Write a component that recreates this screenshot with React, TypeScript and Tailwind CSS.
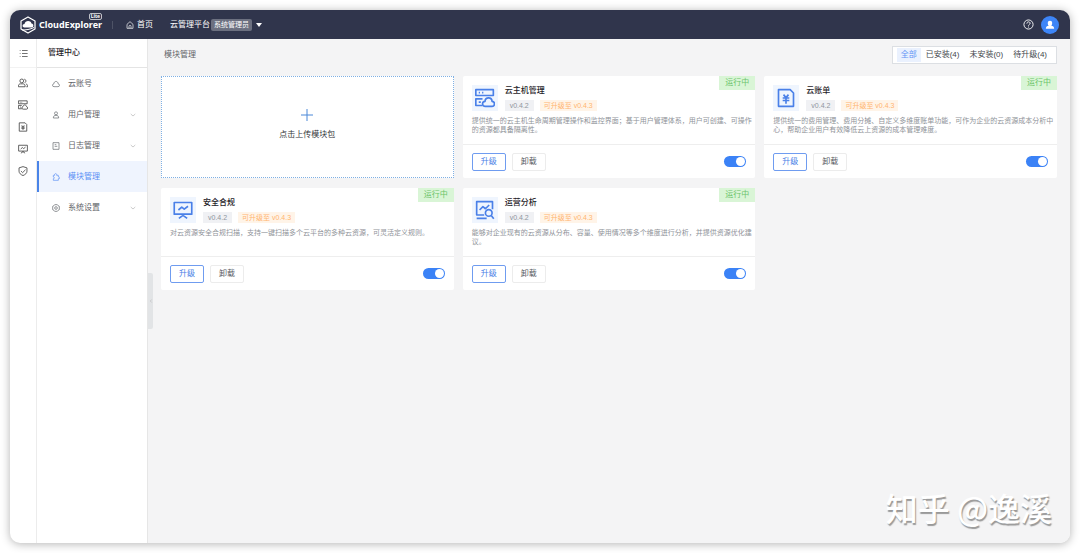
import React, { useState } from 'react';

type IconProps = { className?: string };

type Module = {
  id: string;
  name: string;
  description: string;
  version: string;
  latest: string;
  icon: (props: IconProps) => React.JSX.Element;
};

/* Icons */
function Svg({ className, size = 24, children }: { className?: string; size?: number; children: React.ReactNode }) {
  return (
    <svg
      className={className}
      viewBox={`0 0 ${size} ${size}`}
      fill="none"
      stroke="currentColor"
      strokeWidth="2"
      strokeLinejoin="round"
      aria-hidden="true"
    >
      {children}
    </svg>
  );
}

const ListIcon = ({ className }: IconProps) => (
  <Svg className={className}>
    <path d="M8 4h15M8 12h15M8 20h15M2 4h2M2 12h2M2 20h2" />
  </Svg>
);

const UsersIcon = ({ className }: IconProps) => (
  <Svg className={className}>
    <circle cx="9" cy="7" r="4.5" />
    <path d="M1 21v-2c0-3 2-5 5-5h6c3 0 5 2 5 5v2H1z" />
    <path d="M15 3c5 0 5 8 1 8M19 14c3 1 4 3 4 7h-3" />
  </Svg>
);

const ServerCloudIcon = ({ className }: IconProps) => (
  <Svg className={className}>
    <path d="M1 2h21v7H1zM9 21H1v-8h8M4.500 5.500H6M8.500 5.500H10M4.500 17H7" />
    <path d="M12.500 22c-4.500 0-4.500-5.500-.5-6 .5-5.500 8-5.500 8.500 0 4 .5 3.500 6 0 6z" />
  </Svg>
);

const BillIcon = ({ className }: IconProps) => (
  <Svg className={className}>
    <path d="M3 2h14l4 4v16H3z" />
    <path d="M9 8l3 3.500L15 8M8 12h8M8 15h8M12 11.500V19" />
  </Svg>
);

const BoardIcon = ({ className }: IconProps) => (
  <Svg className={className}>
    <path d="M1.500 3h21v14h-21zM6.500 12l4-3.500 3 2.500L18 7.500M12 17v2M7 22l5-3.500 5 3.500" />
  </Svg>
);

const AnalysisIcon = ({ className }: IconProps) => (
  <Svg className={className}>
    <path d="M11 18H2V2h19v9M5.500 12l4-4 3 2.500L17 6M2 22h12" />
    <circle cx="16.500" cy="15.500" r="4" />
    <path d="M19.500 18.500l3 4" />
  </Svg>
);

const ShieldIcon = ({ className }: IconProps) => (
  <Svg className={className}>
    <path d="M12 1.500l9.500 3v8c0 5-4 8-9.500 10.500C6.500 20.500 2.500 17.500 2.500 12.500v-8z" />
    <path d="M7 12l4 4 7-7" />
  </Svg>
);

const CloudIcon = ({ className }: IconProps) => (
  <Svg className={className}>
    <path d="M6 20c-6 0-6-8-.5-8.500C6 2 18 2 18.500 11.500 24 12 24 20 18 20z" />
  </Svg>
);

const UserIcon = ({ className }: IconProps) => (
  <Svg className={className}>
    <circle cx="12" cy="7" r="4.500" />
    <path d="M4 21c0-6 3-8 8-8s8 2 8 8z" />
  </Svg>
);

const LogIcon = ({ className }: IconProps) => (
  <Svg className={className}>
    <path d="M3 2h18v20H3zM8 8h5M8 13h8" />
  </Svg>
);

const PuzzleIcon = ({ className }: IconProps) => (
  <Svg className={className}>
    <path d="M4 7h4c-2-7 8-7 6 0h5v5c6-1 6 6 0 5v5H4v-5c4 1 4-6 0-5z" />
  </Svg>
);

const GearIcon = ({ className }: IconProps) => (
  <Svg className={className}>
    <path d="M8 2h8l2 3 4 2v10l-4 2-2 3H8l-2-3-4-2V7l4-2z" />
    <circle cx="12" cy="12" r="4" />
  </Svg>
);

const HomeIcon = ({ className }: IconProps) => (
  <Svg className={className}>
    <path d="M3 10l9-8 9 8v12H3zM9 22v-6c0-4 6-4 6 0v6" />
  </Svg>
);

const HelpIcon = ({ className }: IconProps) => (
  <Svg className={className}>
    <circle cx="12" cy="12" r="10" />
    <path d="M8.500 10c0-5 7-5 7-.5 0 2.500-3.500 2.500-3.500 5M12 16.500v2" />
  </Svg>
);

const ChevronIcon = ({ className }: IconProps) => (
  <Svg className={className}>
    <path d="M3 8l9 8 9-8" />
  </Svg>
);

const LogoIcon = ({ className }: IconProps) => (
  <svg className={className} viewBox="0 0 32 36" fill="none" aria-hidden="true">
    <path d="M16 2l14 8v16l-14 8-14-8V10z" stroke="#fff" strokeWidth="2.5" strokeLinejoin="round" />
    <path d="M9 23c-5 0-5-7 0-7 1-7 12-8 14-1 5 0 5 8 0 8z" fill="#fff" />
    <path d="M4 28c8 0 16-1 24-5" stroke="#fff" strokeWidth="2" />
  </svg>
);

const railItems = [
  { label: '用户', icon: UsersIcon },
  { label: '云主机管理', icon: ServerCloudIcon },
  { label: '云账单', icon: BillIcon },
  { label: '运营分析', icon: BoardIcon },
  { label: '安全合规', icon: ShieldIcon },
];

const menuItems = [
  { label: '云账号', icon: CloudIcon, expandable: false },
  { label: '用户管理', icon: UserIcon, expandable: true },
  { label: '日志管理', icon: LogIcon, expandable: true },
  { label: '模块管理', icon: PuzzleIcon, expandable: false },
  { label: '系统设置', icon: GearIcon, expandable: true },
];

const filters = ['全部', '已安装(4)', '未安装(0)', '待升级(4)'];

const modules: Module[] = [
  {
    id: 'vm',
    name: '云主机管理',
    description: '提供统一的云主机生命周期管理操作和监控界面；基于用户管理体系，用户可创建、可操作的资源都具备隔离性。',
    version: 'v0.4.2',
    latest: 'v0.4.3',
    icon: ServerCloudIcon,
  },
  {
    id: 'bill',
    name: '云账单',
    description: '提供统一的费用管理、费用分摊、自定义多维度账单功能，可作为企业的云资源成本分析中心，帮助企业用户有效降低云上资源的成本管理难度。',
    version: 'v0.4.2',
    latest: 'v0.4.3',
    icon: BillIcon,
  },
  {
    id: 'security',
    name: '安全合规',
    description: '对云资源安全合规扫描，支持一键扫描多个云平台的多种云资源，可灵活定义规则。',
    version: 'v0.4.2',
    latest: 'v0.4.3',
    icon: BoardIcon,
  },
  {
    id: 'operation',
    name: '运营分析',
    description: '能够对企业现有的云资源从分布、容量、使用情况等多个维度进行分析，并提供资源优化建议。',
    version: 'v0.4.2',
    latest: 'v0.4.3',
    icon: AnalysisIcon,
  },
];

function Header() {
  return (
    <header className="flex h-[29px] shrink-0 items-center bg-[#30354c] pl-[10px] pr-[11px] text-white">
      <LogoIcon className="h-[18px] w-4" />
      <div className="relative ml-[3px] font-['Noto_Sans'] text-[9px] font-bold leading-3">
        CloudExplorer
        <span className="absolute -top-[6px] right-0 rounded-xs border border-white/70 px-px text-[5px] leading-[5px]">
          Lite
        </span>
      </div>
      <span className="ml-[10px] h-2 w-px bg-white/15" />
      <a href="#home" className="ml-[13px] flex items-center gap-[3px]">
        <HomeIcon className="size-2" />
        首页
      </a>
      <button type="button" className="ml-[17px] flex items-center">
        云管理平台
        <span className="ml-px rounded-xs bg-[#6c7080] px-[3px] text-[7px] leading-3">系统管理员</span>
        <svg className="ml-1 h-1 w-[6px]" viewBox="0 0 6 4" fill="currentColor" aria-hidden="true">
          <path d="M0 0h6L3 4z" />
        </svg>
      </button>
      <div className="ml-auto flex items-center gap-[7px]">
        <button type="button" aria-label="帮助">
          <HelpIcon className="size-[11px]" />
        </button>
        <button type="button" aria-label="账户" className="flex size-[18px] items-center justify-center rounded-full bg-[#3d85f7]">
          <svg className="size-[10px]" viewBox="0 0 24 24" fill="#fff" aria-hidden="true">
            <path d="M12 2c7 0 6 9 3 12 4 1 7 2 7 7H2c0-5 3-6 7-7C6 11 5 2 12 2z" />
          </svg>
        </button>
      </div>
    </header>
  );
}

function Rail() {
  return (
    <nav className="flex w-[27px] shrink-0 flex-col border-r border-[#ececec] text-[#444]">
      <button type="button" aria-label="菜单" className="flex h-[29px] items-center justify-center border-b border-[#f2f2f2]">
        <ListIcon className="size-[9px]" />
      </button>
      <div className="flex flex-col pt-1">
        {railItems.map((item) => (
          <a key={item.label} href="#module" aria-label={item.label} className="flex h-[22px] items-center justify-center">
            <item.icon className="size-[10px]" />
          </a>
        ))}
      </div>
    </nav>
  );
}

function Sidebar() {
  const active = '模块管理';

  return (
    <aside className="w-[111px] shrink-0 border-r border-[#e6e6e6]">
      <h2 className="flex h-[29px] items-center border-b border-[#e4e4e4] pl-[11px] font-medium text-[#1f2329]">
        管理中心
      </h2>
      <nav>
        {menuItems.map((item) => (
          <a
            key={item.label}
            href="#menu"
            className={
              item.label === active
                ? 'flex h-[31px] items-center border-l-2 border-[#4a84e8] bg-[#eff4fe] pl-[13px] pr-[11px] text-[#5a8ff5]'
                : 'flex h-[31px] items-center border-l-2 border-transparent pl-[13px] pr-[11px] text-[#5f6368]'
            }
          >
            <item.icon className="size-2" />
            <span className="ml-2">{item.label}</span>
            {item.expandable && <ChevronIcon className="ml-auto size-[6px] text-[#999]" />}
          </a>
        ))}
      </nav>
    </aside>
  );
}

function ModuleCard({ module }: { module: Module }) {
  const [enabled, setEnabled] = useState(true);

  return (
    <article className="relative flex flex-col rounded-xs bg-white">
      <span className="absolute right-0 top-0 bg-[#d9f5d6] px-[6px] leading-[14px] text-[#6cc46a]">运行中</span>
      <div className="h-[68px] pl-[9px] pt-[9px]">
        <div className="flex gap-[7px]">
          <div className="flex size-[26px] items-center justify-center bg-[#eff5fe] text-[#4a80e8]">
            <module.icon className="size-5" />
          </div>
          <div>
            <h3 className="font-medium leading-3 text-[#1f2329]">{module.name}</h3>
            <div className="mt-[3px] flex gap-[6px] text-[7px] leading-[11px]">
              <span className="bg-[#f0f1f4] px-[5px] text-[#8f959e]">{module.version}</span>
              <span className="bg-[#fff4e8] px-1 text-[#ffb570]">可升级至 {module.latest}</span>
            </div>
          </div>
        </div>
        <p className="mt-[5px] pr-[3px] text-[7px] leading-[9px] text-[#8f9399]">{module.description}</p>
      </div>
      <div className="flex h-[34px] items-center gap-[6px] border-t border-[#eeeeee] px-[9px]">
        <button type="button" className="h-[18px] w-[34px] rounded-xs border border-[#6f9cf0] text-[#4a7fe6]">
          升级
        </button>
        <button type="button" className="h-[18px] w-[34px] rounded-xs border border-[#ececec] text-[#55585e]">
          卸载
        </button>
        <input
          type="checkbox"
          aria-label={module.name}
          checked={enabled}
          onChange={(e) => setEnabled(e.target.checked)}
          className="ml-auto flex h-[11px] w-[22px] cursor-pointer appearance-none items-center rounded-full bg-gray-300 px-px before:size-[9px] before:rounded-full before:bg-white checked:justify-end checked:bg-[#3b82f6]"
        />
      </div>
    </article>
  );
}

export default function App() {
  const [filter, setFilter] = useState('全部');

  return (
    <div className="flex min-h-screen flex-col bg-white p-[10px] font-['Liberation_Sans','Noto_Sans_CJK_SC',sans-serif] text-[8px] leading-3">
      <div className="relative flex grow flex-col overflow-hidden rounded-[10px] bg-white shadow-[0_1px_10px_rgba(0,0,0,0.3)]">
        <Header />
        <div className="flex grow">
          <Rail />
          <Sidebar />
          <main className="relative grow bg-[#f4f4f5] px-[13px] pb-4 pt-[7px]">
            <div className="flex items-center justify-between">
              <h1 className="pl-[3px] text-[#5f6368]">模块管理</h1>
              <div className="flex items-center border border-[#dcdfe3] bg-white px-1 py-px">
                {filters.map((item) => (
                  <button
                    key={item}
                    type="button"
                    onClick={() => setFilter(item)}
                    className={
                      item === filter
                        ? 'bg-[#eaf1fe] px-1 leading-[14px] text-[#6496f5]'
                        : 'px-[5px] leading-[14px] text-[#44474d]'
                    }
                  >
                    {item}
                  </button>
                ))}
              </div>
            </div>

            {/* Module list */}
            <div className="mt-3 grid grid-cols-3 gap-x-[9px] gap-y-[10px]">
              <button
                type="button"
                className="flex flex-col items-center justify-center gap-2 border border-dotted border-[#7fb0e4] bg-white pb-1 text-[#33363b]"
              >
                <svg className="size-3 text-[#4a88d8]" viewBox="0 0 12 12" stroke="currentColor" aria-hidden="true">
                  <path d="M6 0v12M0 6h12" />
                </svg>
                点击上传模块包
              </button>
              {modules.map((module) => (
                <ModuleCard key={module.id} module={module} />
              ))}
            </div>

            <button
              type="button"
              aria-label="收起"
              className="absolute left-0 top-[234px] flex h-14 w-[5px] items-center justify-center rounded-r-xs bg-[#e2e4e6] text-[#999]"
            >
              <ChevronIcon className="size-1 rotate-90" />
            </button>
          </main>
        </div>
        <div className="absolute bottom-3 right-[18px] font-['Noto_Sans_CJK_SC',sans-serif] text-[32px] font-medium leading-[48px] text-white [text-shadow:1px_2px_1px_#999]">
          知乎 @逸溪
        </div>
      </div>
    </div>
  );
}
